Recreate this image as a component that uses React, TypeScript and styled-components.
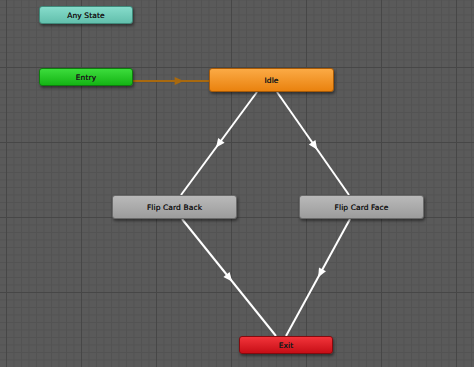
import React from "react";
import styled, { createGlobalStyle } from "styled-components";

const GlobalStyle = createGlobalStyle`
  html, body {
    margin: 0;
    padding: 0;
    background: #5a5a5a;
  }
  * {
    box-sizing: border-box;
  }
`;

type Tone = "any" | "entry" | "idle" | "state" | "exit";

const tones: Record<Tone, { top: string; bottom: string; border: string }> = {
  any: { top: "#86dccb", bottom: "#62bfac", border: "#3f8a7b" },
  entry: { top: "#3cdc3c", bottom: "#14b414", border: "#0e7d0e" },
  idle: { top: "#fbaa45", bottom: "#ea820e", border: "#a85a06" },
  state: { top: "#b9b9b9", bottom: "#9c9c9c", border: "#6a6a6a" },
  exit: { top: "#f2343a", bottom: "#c70e16", border: "#850a0e" },
};

const nodes: { label: string; tone: Tone; x: number; y: number; w: number; h: number }[] = [
  { label: "Any State", tone: "any", x: 39, y: 6, w: 94, h: 18 },
  { label: "Entry", tone: "entry", x: 39, y: 68, w: 94, h: 18 },
  { label: "Idle", tone: "idle", x: 209, y: 68, w: 125, h: 24 },
  { label: "Flip Card Back", tone: "state", x: 112, y: 195, w: 125, h: 24 },
  { label: "Flip Card Face", tone: "state", x: 299, y: 195, w: 125, h: 24 },
  { label: "Exit", tone: "exit", x: 239, y: 336, w: 94, h: 18 },
];

const edges: { x1: number; y1: number; x2: number; y2: number; t: number; color: string }[] = [
  { x1: 133, y1: 81, x2: 209, y2: 81, t: 0.6, color: "#a8690f" },
  { x1: 257, y1: 92, x2: 181, y2: 195, t: 0.5, color: "#ffffff" },
  { x1: 277, y1: 92, x2: 349, y2: 195, t: 0.52, color: "#ffffff" },
  { x1: 182, y1: 219, x2: 276, y2: 336, t: 0.5, color: "#ffffff" },
  { x1: 350, y1: 219, x2: 286, y2: 336, t: 0.46, color: "#ffffff" },
];

const Canvas = styled.div`
  position: relative;
  width: 474px;
  height: 367px;
  overflow: hidden;
  background-color: #5a5a5a;
  background-image:
    linear-gradient(to right, #474747 1px, transparent 1px),
    linear-gradient(to bottom, #474747 1px, transparent 1px),
    linear-gradient(to right, #535353 1px, transparent 1px),
    linear-gradient(to bottom, #535353 1px, transparent 1px);
  background-size: 75px 75px, 75px 75px, 7.5px 7.5px, 7.5px 7.5px;
  background-position: 6px -8px, 6px -8px, 6px -8px, 6px -8px;
`;

const Wires = styled.svg`
  position: absolute;
  inset: 0;
  width: 474px;
  height: 367px;
`;

const StateNode = styled.div<{ $tone: Tone }>`
  position: absolute;
  display: flex;
  align-items: center;
  justify-content: center;
  border-radius: 3px;
  border: 1px solid ${(p) => tones[p.$tone].border};
  background: linear-gradient(
    to bottom,
    ${(p) => tones[p.$tone].top},
    ${(p) => tones[p.$tone].bottom}
  );
  box-shadow: 1px 2px 3px rgba(0, 0, 0, 0.45);
  font-family: "DejaVu Sans", "Liberation Sans", sans-serif;
  font-size: 7.5px;
  color: #1a1a1a;
  letter-spacing: 0.1px;
  text-shadow: 0 0 0.2px #1a1a1a;
`;

function Transition({
  x1, y1, x2, y2, t, color,
}: { x1: number; y1: number; x2: number; y2: number; t: number; color: string }) {
  const mx = x1 + (x2 - x1) * t;
  const my = y1 + (y2 - y1) * t;
  const angle = (Math.atan2(y2 - y1, x2 - x1) * 180) / Math.PI;
  return (
    <g>
      <line x1={x1} y1={y1} x2={x2} y2={y2} stroke={color} strokeWidth={2} />
      <polygon
        points="5,0 -4,-4 -4,4"
        fill={color}
        transform={`translate(${mx} ${my}) rotate(${angle})`}
      />
    </g>
  );
}

export default function App() {
  return (
    <>
      <GlobalStyle />
      <Canvas>
        <Wires viewBox="0 0 474 367">
          {edges.map((e, i) => (
            <Transition key={i} {...e} />
          ))}
        </Wires>
        {nodes.map((n) => (
          <StateNode
            key={n.label}
            $tone={n.tone}
            style={{ left: n.x, top: n.y, width: n.w, height: n.h }}
          >
            {n.label}
          </StateNode>
        ))}
      </Canvas>
    </>
  );
}
